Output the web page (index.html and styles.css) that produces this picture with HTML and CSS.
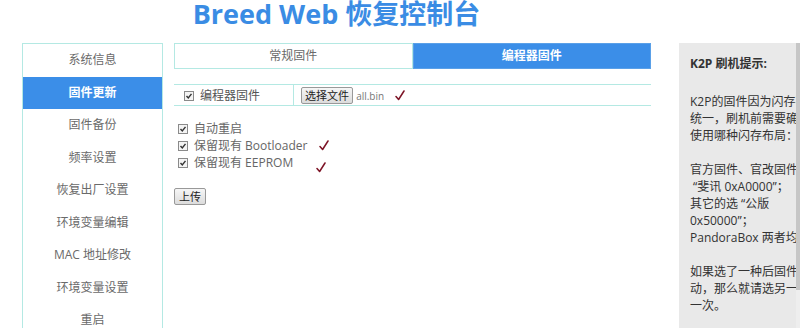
FILE: index.html
```html
<!DOCTYPE html>
<html lang="zh-CN">
<head>
  <meta charset="UTF-8" />
  <meta name="viewport" content="width=device-width, initial-scale=1.0" />
  <title>Breed Web 恢复控制台</title>
  <link rel="stylesheet" href="styles.css">
</head>
<body>
  <div class="page">
    <div class="console">
      <h1 class="title">Breed Web 恢复控制台</h1>

      <div class="layout">
        <ul class="menu">
          <li>系统信息</li>
          <li class="active">固件更新</li>
          <li>固件备份</li>
          <li>频率设置</li>
          <li>恢复出厂设置</li>
          <li>环境变量编辑</li>
          <li>MAC 地址修改</li>
          <li>环境变量设置</li>
          <li>重启</li>
        </ul>

        <div class="main">
          <div class="tabs">
            <div class="tab">常规固件</div>
            <div class="tab active">编程器固件</div>
          </div>

          <table class="fw-table">
            <tr>
              <td class="fw-name"><span class="cb"></span>编程器固件</td>
              <td class="fw-file">
                <button class="btn">选择文件</button>
                <span class="fname">all.bin</span>
                <svg class="tick" width="10" height="11" viewBox="0 0 10 11"><path d="M1 6.5 L3.6 9.5 L9 1" fill="none" stroke="#7d1426" stroke-width="1.5" stroke-linecap="round" stroke-linejoin="round"/></svg>
              </td>
            </tr>
          </table>

          <div class="options">
            <div class="opt"><span class="cb"></span>自动重启</div>
            <div class="opt"><span class="cb"></span>保留现有 Bootloader
              <svg class="tick" width="10" height="11" viewBox="0 0 10 11"><path d="M1 6.5 L3.6 9.5 L9 1" fill="none" stroke="#7d1426" stroke-width="1.5" stroke-linecap="round" stroke-linejoin="round"/></svg>
            </div>
            <div class="opt"><span class="cb"></span>保留现有 EEPROM
              <svg class="tick low" width="10" height="11" viewBox="0 0 10 11"><path d="M1 6.5 L3.6 9.5 L9 1" fill="none" stroke="#7d1426" stroke-width="1.5" stroke-linecap="round" stroke-linejoin="round"/></svg>
            </div>
          </div>

          <button class="btn upload">上传</button>
        </div>
      </div>
    </div>

    <aside class="tips">
      <div class="tips-body">
        <h3>K2P 刷机提示:</h3>
        <p>K2P的固件因为闪存不<br>统一，刷机前需要确认<br>使用哪种闪存布局：</p>
        <p>官方固件、官改固件选<br>&nbsp;“斐讯 0xA0000”；<br>其它的选 “公版<br>0x50000”；<br>PandoraBox 两者均可</p>
        <p>如果选了一种后固件不启<br>动，那么就请选另一种再刷<br>一次。</p>
      </div>
      <div class="track"><div class="thumb"></div></div>
    </aside>
  </div>
</body>
</html>
```

FILE: styles.css
```css
body {
  margin: 0;
  background: #fff;
  font-family: "Open Sans", "Noto Sans CJK SC", sans-serif;
  color: #666;
  overflow: hidden;
}

.page {
  display: flex;
  align-items: flex-start;
  padding-left: 22px;
  width: 1000px;
}

.console {
  width: 629px;
  flex-shrink: 0;
}

.title {
  margin: 0 0 15px;
  font-size: 27px;
  line-height: 28px;
  font-weight: bold;
  color: #3a8ce4;
  text-align: center;
}

.layout {
  display: flex;
  gap: 11px;
}

/* left menu */
.menu {
  list-style: none;
  margin: 0;
  padding: 0;
  width: 139px;
  border: 1px solid #b4e9e3;
  flex-shrink: 0;
}

.menu li {
  height: 32.5px;
  line-height: 32.5px;
  text-align: center;
  font-size: 12px;
  color: #6a6a6a;
}

.menu li.active {
  background: #3b8ee8;
  color: #fff;
  font-weight: bold;
}

/* main area */
.main {
  flex: 1;
}

.tabs {
  display: flex;
  height: 26px;
}

.tab {
  flex: 1;
  border: 1px solid #b4e9e3;
  line-height: 24px;
  text-align: center;
  font-size: 12px;
  color: #6a6a6a;
}

.tab.active {
  background: #3b8ee8;
  border-color: #5aa0e8;
  color: #fff;
  font-weight: bold;
}

.fw-table {
  width: 100%;
  margin-top: 15px;
  border-collapse: collapse;
}

.fw-table td {
  border-top: 1px solid #b4e9e3;
  border-bottom: 1px solid #b4e9e3;
  height: 20px;
  padding: 0;
  font-size: 12px;
  color: #555;
}

.fw-name {
  width: 109px;
  padding-left: 10px !important;
  border-right: 1px solid #b4e9e3;
}

.fw-file {
  padding-left: 7px !important;
}

.cb {
  display: inline-block;
  width: 8px;
  height: 8px;
  margin-right: 6px;
  border: 1px solid #8a8a8a;
  background: #f4f4f4 url("data:image/svg+xml,%3Csvg xmlns='http://www.w3.org/2000/svg' width='8' height='8'%3E%3Cpath d='M1.5 4 L3.3 6 L6.5 1.8' fill='none' stroke='%23333' stroke-width='1.4'/%3E%3C/svg%3E") no-repeat center;
  vertical-align: -1px;
}

.btn {
  font-family: "Noto Sans CJK SC", sans-serif;
  font-size: 11px;
  color: #222;
  padding: 0 3px;
  height: 17px;
  line-height: 15px;
  border: 1px solid #999;
  border-radius: 2px;
  background: linear-gradient(#f6f6f6, #dcdcdc);
}

.fname {
  font-size: 10px;
  color: #777;
}

.tick {
  margin-left: 8px;
  vertical-align: -1px;
}

.tick.low {
  margin-left: 20px;
  vertical-align: -6px;
}

.options {
  margin-top: 14px;
}

.opt {
  height: 17px;
  line-height: 17px;
  font-size: 12px;
  color: #666;
  padding-left: 4px;
}

.upload {
  margin-top: 17px;
  padding: 0 4px;
}

/* right tips panel */
.tips {
  display: flex;
  margin-left: 28px;
  margin-top: 43px;
  height: 300px;
  flex-shrink: 0;
}

.tips-body {
  width: 106px;
  padding: 12px 0 0 11px;
  background: #e9e9e9;
  overflow: hidden;
  white-space: nowrap;
  font-size: 12px;
  line-height: 17px;
  color: #333;
}

.tips-body h3 {
  margin: 0 0 21px;
  font-size: 12px;
  font-weight: bold;
}

.tips-body p {
  margin: 0 0 17px;
}

.track {
  width: 4px;
  background: #eeeeee;
}

.thumb {
  height: 247px;
  background: #c6c6c6;
}
```
